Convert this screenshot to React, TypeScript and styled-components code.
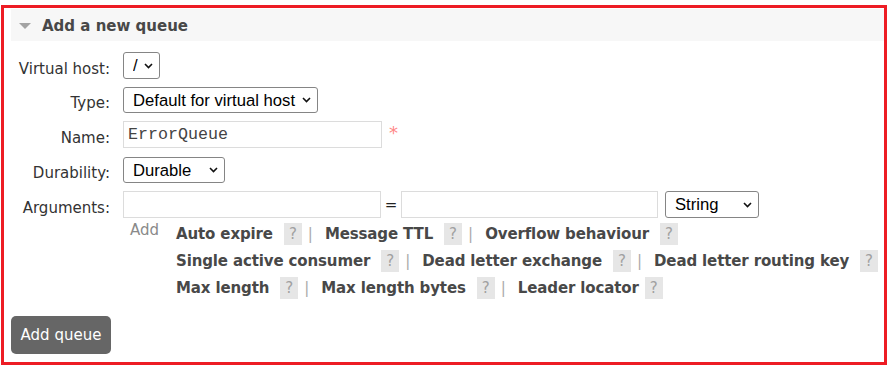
import React from 'react';
import styled, { createGlobalStyle } from 'styled-components';

const GlobalStyle = createGlobalStyle`
    body {
        margin: 0;
        background: #fff;
        font-family: 'DejaVu Sans', Verdana, sans-serif;
        font-size: 15px;
        color: #333;
    }
`;

const Frame = styled.div`
    margin: 5px 0 0 1px;
    width: 886px;
    height: 360px;
    box-sizing: border-box;
    border: 3px solid #ed1c24;
    padding: 1px 0 0 7px;
`;

const Header = styled.h2`
    margin: 0;
    height: 32px;
    box-sizing: border-box;
    display: flex;
    align-items: center;
    gap: 11px;
    padding: 2px 0 0 8px;
    background: #f7f7f7;
    font-size: 15px;
    font-weight: bold;
    color: #484848;
`;

const Form = styled.form`
    display: flex;
    flex-direction: column;
    margin-top: 11px;
`;

const Row = styled.div<{ $gap?: number }>`
    display: flex;
    align-items: stretch;
    gap: 13px;
    margin-top: ${(p) => p.$gap ?? 8}px;
    &:first-child {
        margin-top: 0;
    }
`;

const Label = styled.label<{ $fixed?: boolean }>`
    flex: none;
    width: 99px;
    box-sizing: border-box;
    display: flex;
    justify-content: flex-end;
    align-items: flex-end;
    padding-bottom: 1px;
    line-height: 18px;
    color: #333;
    ${(p) => (p.$fixed ? 'align-self: flex-start; height: 27px;' : '')}
`;

const SelectWrap = styled.span<{ $w: number; $h?: number }>`
    position: relative;
    display: inline-block;
    flex: none;
    width: ${(p) => p.$w}px;
    height: ${(p) => p.$h ?? 27}px;
`;

const Select = styled.select`
    appearance: none;
    width: 100%;
    height: 100%;
    box-sizing: border-box;
    border: 1px solid #858585;
    border-radius: 3px;
    background: #fff;
    padding: 0 20px 0 9px;
    font-family: 'Liberation Sans', Arial, sans-serif;
    font-size: 16.67px;
    color: #000;
`;

const Chevron = styled.svg`
    position: absolute;
    right: 7px;
    top: 50%;
    transform: translateY(-50%);
    pointer-events: none;
`;

const TextInput = styled.input<{ $w: number }>`
    flex: none;
    width: ${(p) => p.$w}px;
    height: 27px;
    box-sizing: border-box;
    border: 1px solid #dcdcdc;
    border-radius: 0;
    padding: 0 4px;
    font-family: 'Liberation Mono', 'Courier New', monospace;
    font-size: 16.67px;
    color: #444;
    outline: none;
`;

const Required = styled.span`
    align-self: flex-start;
    margin-left: 7px;
    padding-top: 3px;
    font-size: 18px;
    line-height: 18px;
    color: #f88;
`;

const Controls = styled.div`
    display: flex;
    flex-direction: column;
`;

const InputLine = styled.div`
    display: flex;
    align-items: center;
    height: 27px;
`;

const Equals = styled.span`
    flex: none;
    width: 20px;
    text-align: center;
    color: #222;
`;

const Spacer = styled.span<{ $w: number }>`
    flex: none;
    width: ${(p) => p.$w}px;
`;

const HelpBlock = styled.div`
    display: grid;
    grid-template-columns: 53px auto;
    margin-top: 2px;
`;

const AddLink = styled.span`
    padding-left: 7px;
    margin-top: -3px;
    line-height: 27px;
    color: #8a8a8a;
`;

const LinkLines = styled.div`
    display: flex;
    flex-direction: column;
`;

const LinkLine = styled.div`
    display: flex;
    align-items: center;
    height: 27px;
    white-space: nowrap;
`;

const ArgLink = styled.span`
    font-weight: bold;
    letter-spacing: -0.13px;
    color: #484848;
`;

const Help = styled.span<{ $tight?: boolean }>`
    display: inline-flex;
    justify-content: center;
    align-items: center;
    width: 18px;
    height: 22px;
    margin-left: ${(p) => (p.$tight ? 6 : 11)}px;
    background: #e6e6e6;
    color: #a0a0a0;
`;

const Sep = styled.span`
    margin: 0 12px 0 6px;
    color: #aaa;
`;

const SubmitButton = styled.button`
    margin-top: 15px;
    width: 100px;
    height: 38px;
    border: none;
    border-radius: 5px;
    background: #666;
    color: #fff;
    font-family: 'DejaVu Sans', Verdana, sans-serif;
    font-size: 15px;
    padding: 0;
`;

const Triangle = () => (
    <svg width="12" height="6" viewBox="0 0 12 6">
        <polygon points="0,0 12,0 6,6" fill="#a3a3a3" />
    </svg>
);

const Dropdown: React.FC<{ w: number; h?: number; value: string }> = ({ w, h, value }) => (
    <SelectWrap $w={w} $h={h}>
        <Select defaultValue={value}>
            <option value={value}>{value}</option>
        </Select>
        <Chevron width="9" height="6" viewBox="0 0 9 6">
            <path d="M1 1l3.5 3.5L8 1" fill="none" stroke="#111" strokeWidth="1.6" />
        </Chevron>
    </SelectWrap>
);

type Arg = { name: string; tight?: boolean };

const argumentLines: Arg[][] = [
    [{ name: 'Auto expire' }, { name: 'Message TTL' }, { name: 'Overflow behaviour' }],
    [{ name: 'Single active consumer' }, { name: 'Dead letter exchange' }, { name: 'Dead letter routing key' }],
    [{ name: 'Max length' }, { name: 'Max length bytes' }, { name: 'Leader locator', tight: true }],
];

const App: React.FC = () => (
    <>
        <GlobalStyle />
        <Frame>
            <Header>
                <Triangle />
                Add a new queue
            </Header>
            <Form onSubmit={(e) => e.preventDefault()}>
                <Row>
                    <Label>Virtual host:</Label>
                    <Dropdown w={37} h={27} value="/" />
                </Row>
                <Row>
                    <Label>Type:</Label>
                    <Dropdown w={195} h={26} value="Default for virtual host" />
                </Row>
                <Row>
                    <Label>Name:</Label>
                    <InputLine>
                        <TextInput $w={259} defaultValue="ErrorQueue" />
                        <Required>*</Required>
                    </InputLine>
                </Row>
                <Row $gap={9}>
                    <Label>Durability:</Label>
                    <Dropdown w={102} h={26} value="Durable" />
                </Row>
                <Row>
                    <Label $fixed>Arguments:</Label>
                    <Controls>
                        <InputLine>
                            <TextInput $w={258} />
                            <Equals>=</Equals>
                            <TextInput $w={257} />
                            <Spacer $w={7} />
                            <Dropdown w={94} h={27} value="String" />
                        </InputLine>
                        <HelpBlock>
                            <AddLink>Add</AddLink>
                            <LinkLines>
                                {argumentLines.map((line, i) => (
                                    <LinkLine key={i}>
                                        {line.map((arg, j) => (
                                            <React.Fragment key={arg.name}>
                                                {j > 0 && <Sep>|</Sep>}
                                                <ArgLink>{arg.name}</ArgLink>
                                                <Help $tight={arg.tight}>?</Help>
                                            </React.Fragment>
                                        ))}
                                    </LinkLine>
                                ))}
                            </LinkLines>
                        </HelpBlock>
                    </Controls>
                </Row>
                <div>
                    <SubmitButton type="submit">Add queue</SubmitButton>
                </div>
            </Form>
        </Frame>
    </>
);

export default App;
